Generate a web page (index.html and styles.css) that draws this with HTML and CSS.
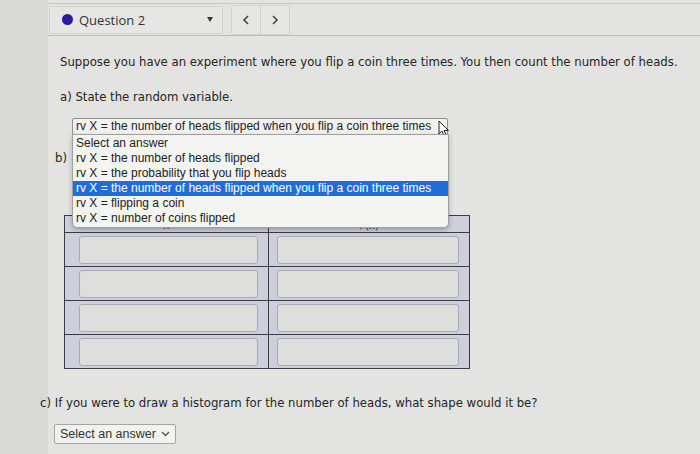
FILE: index.html
```html
<!DOCTYPE html>
<html>
    <head>
        <link rel="stylesheet" href="styles.css">
    </head>
    <body>
        <div class="page">
            <div class="side"></div>
            <div class="main">
                <div class="header">
                    <div class="qselect">
                        <span class="dot"></span>
                        <span class="qname">Question 2</span>
                        <span class="caret"></span>
                    </div>
                    <div class="nav">
                        <span class="navbtn"><svg width="8" height="10" viewBox="0 0 8 10"><polyline points="6,1 2,5 6,9" fill="none" stroke="#444" stroke-width="1.6"/></svg></span>
                        <span class="navbtn"><svg width="8" height="10" viewBox="0 0 8 10"><polyline points="2,1 6,5 2,9" fill="none" stroke="#444" stroke-width="1.6"/></svg></span>
                    </div>
                </div>
                <div class="question">
                    <p class="intro">Suppose you have an experiment where you flip a coin three times. You then count the number of heads.</p>
                    <p class="part-a">a) State the random variable.</p>
                    <div class="dropwrap">
                        <div class="select open">rv X = the number of heads flipped when you flip a coin three times</div>
                        <svg class="pointer" width="12" height="18" viewBox="0 0 12 18"><path d="M1 1 L1 14 L4 11 L6.5 16.5 L8.5 15.5 L6 10.5 L10.5 10.5 Z" fill="#fff" stroke="#222" stroke-width="1"/></svg>
                        <ul class="options">
                            <li>Select an answer</li>
                            <li>rv X = the number of heads flipped</li>
                            <li>rv X = the probability that you flip heads</li>
                            <li class="active">rv X = the number of heads flipped when you flip a coin three times</li>
                            <li>rv X = flipping a coin</li>
                            <li>rv X = number of coins flipped</li>
                        </ul>
                    </div>
                    <p class="part-b">b)</p>
                    <table class="dist">
                        <tr><th class="colx">x</th><th>P(x)</th></tr>
                        <tr><td><span class="cell"></span></td><td><span class="cell"></span></td></tr>
                        <tr><td><span class="cell"></span></td><td><span class="cell"></span></td></tr>
                        <tr><td><span class="cell"></span></td><td><span class="cell"></span></td></tr>
                        <tr><td><span class="cell"></span></td><td><span class="cell"></span></td></tr>
                    </table>
                    <p class="part-c">c) If you were to draw a histogram for the number of heads, what shape would it be?</p>
                    <div class="select small">Select an answer <svg width="9" height="6" viewBox="0 0 9 6"><polyline points="1,1 4.5,4.5 8,1" fill="none" stroke="#555" stroke-width="1.4"/></svg></div>
                </div>
            </div>
        </div>
    </body>
</html>
```

FILE: styles.css
```css
body{
    margin: 0;
    background: #e3e3e1;
    font-family: "DejaVu Sans Condensed", "DejaVu Sans", sans-serif;
    color: #262626;
}
.page{
    display: flex;
    width: 700px;
    height: 454px;
    overflow: hidden;
}
.side{
    width: 48px;
    background: #d9d9d7;
}
.main{
    flex: 1;
    margin-top: 3px;
    border-top: 1px solid #c9c9c7;
}
.header{
    display: flex;
    align-items: center;
    gap: 8px;
    height: 31px;
    border-bottom: 1px solid #bdbdbb;
}
.qselect{
    display: flex;
    align-items: center;
    margin-left: 1px;
    width: 172px;
    height: 26px;
    border: 1px solid #d2d2d0;
    border-radius: 3px;
    background: #e6e6e4;
}
.dot{
    width: 11px;
    height: 11px;
    margin-left: 12px;
    border-radius: 50%;
    background: #2a1a9c;
}
.qname{
    margin-left: 6px;
    font-family: "Open Sans", sans-serif;
    font-size: 13px;
    color: #333;
}
.caret{
    margin-left: auto;
    margin-right: 9px;
    border-left: 3.5px solid transparent;
    border-right: 3.5px solid transparent;
    border-top: 5px solid #333;
}
.nav{
    display: flex;
    height: 28px;
    border: 1px solid #d2d2d0;
    border-radius: 3px;
    background: #e6e6e4;
}
.navbtn{
    display: flex;
    align-items: center;
    justify-content: center;
    width: 28px;
}
.navbtn + .navbtn{
    border-left: 1px solid #d2d2d0;
}
.question{
    padding-left: 12px;
}
.question p{
    margin: 0;
    font-size: 13px;
    line-height: 18px;
}
.intro{
    padding-top: 17px;
}
.part-a{
    margin-top: 17px !important;
}
.dropwrap{
    position: relative;
    margin: 12px 0 0 12px;
    width: 376px;
}
.select{
    box-sizing: border-box;
    font-family: "Liberation Sans", Arial, sans-serif;
    font-size: 12px;
    background: #f2f2f0;
    border: 1px solid #8f8f8f;
    color: #222;
}
.select.open{
    height: 17px;
    line-height: 15px;
    padding-left: 3px;
    border-radius: 2px;
}
.pointer{
    position: absolute;
    left: 366px;
    top: 2px;
}
.options{
    position: absolute;
    left: 0;
    top: 16px;
    width: 375px;
    margin: 0;
    padding: 1px 0 1px;
    list-style: none;
    font-family: "Liberation Sans", Arial, sans-serif;
    font-size: 12px;
    line-height: 15px;
    background: #f4f4f2;
    border: 1px solid #a0a0a0;
    border-radius: 0 0 5px 5px;
    box-shadow: 0 2px 5px rgba(0,0,0,0.25);
    z-index: 2;
}
.options li{
    padding-left: 3px;
    color: #222;
}
.options li.active{
    background: #1f6ed8;
    color: #fff;
}
.part-b{
    margin: 14px 0 0 -5px !important;
}
.dist{
    margin: 48px 0 0 4px;
    width: 406px;
    table-layout: fixed;
    border-collapse: collapse;
    background: #cfcedb;
    border: 1.5px solid #3c3c48;
}
.dist th{
    height: 13px;
    padding: 3px 0 0;
    font-size: 11px;
    font-weight: normal;
    line-height: 12px;
    border-left: 1px solid #3c3c48;
    border-bottom: 1.5px solid #3c3c48;
}
.dist th.colx{
    width: 203px;
}
.dist td{
    height: 33px;
    padding: 0 10px 0 14px;
    border-left: 1px solid #3c3c48;
    border-top: 1px solid #3c3c48;
}
.dist td + td{
    padding-left: 8px;
}
.cell{
    display: block;
    height: 26px;
    background: #dededc;
    border: 1px solid #a9a9b2;
    border-radius: 3px;
}
.part-c{
    margin: 25px 0 0 -20px !important;
}
.select.small{
    display: inline-flex;
    align-items: center;
    gap: 5px;
    margin: 12px 0 0 -6px;
    height: 20px;
    padding: 0 5px;
    font-size: 12.5px;
    border-radius: 2px;
    border-color: #a5a5a5;
    color: #333;
}
```
